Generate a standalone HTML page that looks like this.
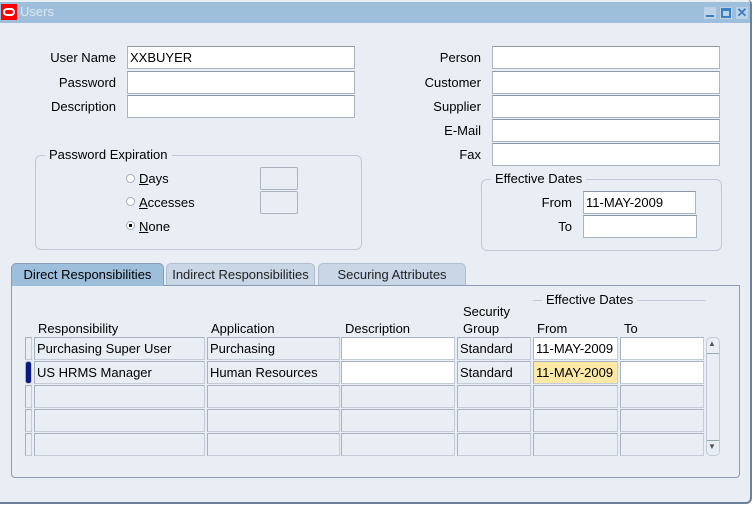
<!DOCTYPE html>
<html><head><style>
body{margin:0;width:755px;height:509px;background:#fff;font-family:"Liberation Sans",sans-serif;font-size:13px;color:#000;overflow:hidden;position:relative}
.a{position:absolute}
.win{left:0;top:0;width:750px;height:502px;background:#e9eef5;border-right:2px solid #6d7f99;border-bottom:2px solid #6d7f99;border-radius:0 4px 6px 0}
.title{left:0;top:2px;width:750px;height:21px;background:#9dbfdc}
.lbl{text-align:right;height:22px;line-height:24px}
.in{background:#fff;border:1px solid #a9b4c2;border-top-color:#8e99a8;box-sizing:border-box;height:23px;line-height:21px;padding-left:2px}
.gb{border:1px solid #c0cad8;border-radius:6px;box-sizing:border-box}
.gt{background:#e9eef5;padding:0 4px;line-height:14px}
.cell{box-sizing:border-box;height:23px;border:1px solid #c3ccd8;border-top-color:#a9b2c0;border-left-color:#a9b2c0;background:#e9eef5;line-height:21px;padding-left:2px;white-space:nowrap;overflow:hidden}
.w{background:#fff}
.y{background:#fde9a6}
.tab{top:263px;height:22px;line-height:22px;text-align:center;background:#c8d6e6;border:1px solid #aebdd0;border-bottom:none;border-radius:5px 5px 0 0;box-sizing:border-box;color:#222}
.rad{width:9px;height:9px;border:1px solid #aab;border-radius:50%;background:#fff;box-sizing:border-box}
</style></head><body>
<div class="a win"></div>
<div class="a title"></div>
<div class="a" style="left:1px;top:4px;width:16px;height:16px;background:#f00"></div>
<div class="a" style="left:3px;top:8px;width:12px;height:8px;border:2px solid #fff;border-radius:5px;box-sizing:border-box"></div>
<div class="a" style="left:20px;top:4px;color:#dde8f3;font-size:13px">Users</div>
<div class="a" style="left:704px;top:7px;width:12px;height:12px;background:#bcd3e8"><div class="a" style="left:2px;top:8px;width:8px;height:2px;background:#3b7fbf"></div></div>
<div class="a" style="left:720px;top:7px;width:12px;height:12px;background:#bcd3e8"><div class="a" style="left:1px;top:1px;width:10px;height:10px;border:2px solid #3b7fbf;border-top-width:3px;box-sizing:border-box"></div></div>
<div class="a" style="left:736px;top:7px;width:12px;height:12px;background:#bcd3e8;color:#3b7fbf;font-weight:bold;font-size:13px;line-height:12px;text-align:center">✕</div>

<div class="a lbl" style="left:20px;top:46px;width:96px">User Name</div>
<div class="a lbl" style="left:20px;top:71px;width:96px">Password</div>
<div class="a lbl" style="left:20px;top:95px;width:96px">Description</div>
<div class="a in" style="left:127px;top:46px;width:228px">XXBUYER</div>
<div class="a in" style="left:127px;top:71px;width:228px"></div>
<div class="a in" style="left:127px;top:95px;width:228px"></div>

<div class="a lbl" style="left:380px;top:46px;width:101px">Person</div>
<div class="a lbl" style="left:380px;top:71px;width:101px">Customer</div>
<div class="a lbl" style="left:380px;top:95px;width:101px">Supplier</div>
<div class="a lbl" style="left:380px;top:119px;width:101px">E-Mail</div>
<div class="a lbl" style="left:380px;top:143px;width:101px">Fax</div>
<div class="a in" style="left:492px;top:46px;width:228px"></div>
<div class="a in" style="left:492px;top:71px;width:228px"></div>
<div class="a in" style="left:492px;top:95px;width:228px"></div>
<div class="a in" style="left:492px;top:119px;width:228px"></div>
<div class="a in" style="left:492px;top:143px;width:228px"></div>

<div class="a gb" style="left:35px;top:155px;width:327px;height:95px"></div>
<div class="a gt" style="left:45px;top:148px">Password Expiration</div>
<div class="a rad" style="left:126px;top:174px"></div><div class="a" style="left:139px;top:171px"><u>D</u>ays</div>
<div class="a rad" style="left:126px;top:197px"></div><div class="a" style="left:139px;top:195px"><u>A</u>ccesses</div>
<div class="a rad" style="left:126px;top:221px"><div class="a" style="left:2px;top:2px;width:3px;height:3px;background:#000"></div></div><div class="a" style="left:139px;top:219px"><u>N</u>one</div>
<div class="a gb" style="left:260px;top:167px;width:38px;height:23px;border-color:#aab3c0;border-radius:2px"></div>
<div class="a gb" style="left:260px;top:191px;width:38px;height:23px;border-color:#aab3c0;border-radius:2px"></div>

<div class="a gb" style="left:481px;top:179px;width:241px;height:72px"></div>
<div class="a gt" style="left:491px;top:172px">Effective Dates</div>
<div class="a lbl" style="left:520px;top:191px;width:52px">From</div>
<div class="a lbl" style="left:520px;top:215px;width:52px">To</div>
<div class="a in" style="left:583px;top:191px;width:113px">11-MAY-2009</div>
<div class="a in" style="left:583px;top:215px;width:114px"></div>

<div class="a" style="left:11px;top:285px;width:729px;height:193px;border:1px solid #8d9cb3;border-radius:0 0 4px 4px;box-sizing:border-box"></div>
<div class="a tab" style="left:11px;width:153px;height:23px;background:#9dbfdc;color:#000;border-color:#8d9cb3">Direct Responsibilities</div>
<div class="a tab" style="left:166px;width:149px">Indirect Responsibilities</div>
<div class="a tab" style="left:318px;width:148px">Securing Attributes</div>

<div class="a" style="left:38px;top:321px">Responsibility</div>
<div class="a" style="left:211px;top:321px">Application</div>
<div class="a" style="left:345px;top:321px">Description</div>
<div class="a" style="left:463px;top:304px">Security</div>
<div class="a" style="left:463px;top:321px">Group</div>
<div class="a" style="left:537px;top:321px">From</div>
<div class="a" style="left:624px;top:321px">To</div>
<div class="a" style="left:533px;top:300px;width:173px;height:1px;background:#c0cad8"></div>
<div class="a gt" style="left:542px;top:293px">Effective Dates</div>

<div class="a" style="left:25px;top:337px">
<div style="position:relative">
<div class="a cell" style="left:0;top:0;width:7px;padding:0"></div><div class="a cell" style="left:9px;top:0;width:171px">Purchasing Super User</div><div class="a cell" style="left:182px;top:0;width:133px">Purchasing</div><div class="a cell w" style="left:316px;top:0;width:114px"></div><div class="a cell" style="left:432px;top:0;width:74px">Standard</div><div class="a cell w" style="left:508px;top:0;width:85px">11-MAY-2009</div><div class="a cell w" style="left:595px;top:0;width:84px"></div>
<div class="a cell" style="left:0;top:24px;width:7px;padding:0;background:#0a1a80;border-radius:3px"></div><div class="a cell" style="left:9px;top:24px;width:171px">US HRMS Manager</div><div class="a cell" style="left:182px;top:24px;width:133px">Human Resources</div><div class="a cell w" style="left:316px;top:24px;width:114px"></div><div class="a cell" style="left:432px;top:24px;width:74px">Standard</div><div class="a cell y" style="left:508px;top:24px;width:85px">11-MAY-2009</div><div class="a cell w" style="left:595px;top:24px;width:84px"></div>
<div class="a cell" style="left:0;top:48px;width:7px;padding:0"></div><div class="a cell" style="left:9px;top:48px;width:171px"></div><div class="a cell" style="left:182px;top:48px;width:133px"></div><div class="a cell" style="left:316px;top:48px;width:114px"></div><div class="a cell" style="left:432px;top:48px;width:74px"></div><div class="a cell" style="left:508px;top:48px;width:85px"></div><div class="a cell" style="left:595px;top:48px;width:84px"></div>
<div class="a cell" style="left:0;top:72px;width:7px;padding:0"></div><div class="a cell" style="left:9px;top:72px;width:171px"></div><div class="a cell" style="left:182px;top:72px;width:133px"></div><div class="a cell" style="left:316px;top:72px;width:114px"></div><div class="a cell" style="left:432px;top:72px;width:74px"></div><div class="a cell" style="left:508px;top:72px;width:85px"></div><div class="a cell" style="left:595px;top:72px;width:84px"></div>
<div class="a cell" style="left:0;top:96px;width:7px;padding:0"></div><div class="a cell" style="left:9px;top:96px;width:171px"></div><div class="a cell" style="left:182px;top:96px;width:133px"></div><div class="a cell" style="left:316px;top:96px;width:114px"></div><div class="a cell" style="left:432px;top:96px;width:74px"></div><div class="a cell" style="left:508px;top:96px;width:85px"></div><div class="a cell" style="left:595px;top:96px;width:84px"></div>
</div></div>
<div class="a" style="left:706px;top:337px;width:14px;height:119px;border:1px solid #c0cad8;border-radius:5px;box-sizing:border-box"></div>
<div class="a" style="left:708px;top:339px;font-size:8px;color:#555">▲</div>
<div class="a" style="left:708px;top:442px;font-size:8px;color:#555">▼</div>
<div class="a" style="left:707px;top:353px;width:12px;height:1px;background:#9aa"></div>
<div class="a" style="left:707px;top:440px;width:12px;height:1px;background:#9aa"></div>
</body></html>
